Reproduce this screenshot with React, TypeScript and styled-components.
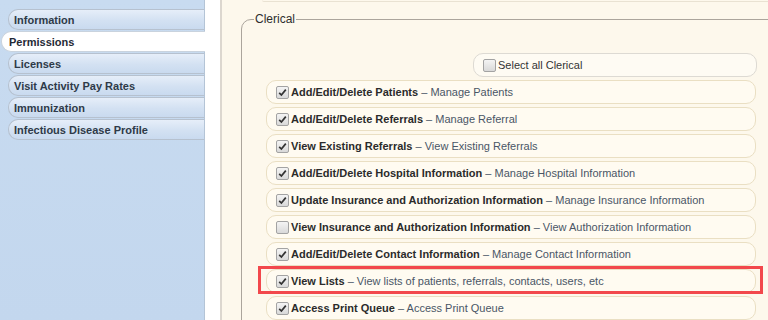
import React from "react";
import styled, { createGlobalStyle } from "styled-components";

const Global = createGlobalStyle`
  html, body { margin: 0; padding: 0; overflow: hidden; }
  body { font-family: "Liberation Sans", Arial, sans-serif; background: #fff; }
`;

const Page = styled.div`
  display: flex;
  width: 768px;
  height: 320px;
  overflow: hidden;
`;

const Sidebar = styled.nav`
  flex: none;
  background: linear-gradient(180deg, #c8dbf0 0%, #c3d7ee 100%);
  border-right: 1px solid #b4c4d6;
  padding-top: 9px;
  display: flex;
  flex-direction: column;
  gap: 1px;
  box-sizing: border-box;
  width: 205px;
`;

const Tab = styled.div<{ $active?: boolean }>`
  height: 21px;
  box-sizing: border-box;
  margin-left: ${(p) => (p.$active ? "1px" : "8px")};
  padding-left: ${(p) => (p.$active ? "7px" : "5px")};
  display: flex;
  align-items: center;
  font-size: 11px;
  font-weight: bold;
  color: ${(p) => (p.$active ? "#1f2a36" : "#2e3a48")};
  border: 1px solid ${(p) => (p.$active ? "#c9d3de" : "#b6c1cf")};
  border-right: none;
  border-radius: 10px 0 0 10px;
  background: ${(p) =>
    p.$active ? "#ffffff" : "linear-gradient(180deg, #e6eef9 0%, #d3e1f2 55%, #c9daef 100%)"};
  margin-right: ${(p) => (p.$active ? "-1px" : "0")};
  position: relative;
`;

const Gutter = styled.div`
  width: 15px;
  flex: none;
  background: #fff;
  border-right: 2px solid #dcd7cf;
`;

const Content = styled.main`
  flex: 1;
  background: #fdf8ec;
  overflow: hidden;
  position: relative;
`;

const PrevBox = styled.div`
  height: 1px;
  margin-left: 40px;
  border-bottom: 1px solid #e9e2d2;
  border-bottom-left-radius: 8px;
`;

const Fieldset = styled.fieldset`
  margin: 10px 0 0 19px;
  width: 560px;
  box-sizing: border-box;
  border: 1px solid #aba59c;
  border-radius: 10px 0 0 0;
  padding: 27px 0 0 24px;
  height: 400px;
`;

const Legend = styled.legend`
  font-size: 12px;
  color: #2e2e2e;
  padding: 0 1px;
  margin-left: -12px;
`;

const Rows = styled.div`
  width: 490px;
  display: flex;
  flex-direction: column;
  gap: 3px;
`;

const SelectAll = styled.label`
  align-self: flex-end;
  width: 284px;
  height: 24px;
  margin-right: -1px;
  box-sizing: border-box;
  border: 1px solid #dddad3;
  border-radius: 10px;
  background: #fefbf3;
  display: flex;
  align-items: center;
  padding-left: 9px;
  gap: 2px;
  font-size: 11px;
  color: #333;
`;

const Row = styled.div`
  position: relative;
  height: 24px;
  box-sizing: border-box;
  border: 1px solid #eadfc3;
  border-radius: 10px;
  background: #fffbf1;
  display: flex;
  align-items: center;
  padding-left: 9px;
  gap: 2px;
  font-size: 11px;
  white-space: nowrap;
`;

const Highlight = styled.div`
  position: absolute;
  top: -4px;
  left: -9px;
  right: -8px;
  bottom: -2px;
  border: 3px solid #f2484c;
  pointer-events: none;
`;

const Name = styled.span`
  font-weight: bold;
  color: #2b2b2b;
`;

const Desc = styled.span`
  color: #4a5666;
`;

const Box = styled.span`
  width: 13px;
  height: 13px;
  flex: none;
  box-sizing: border-box;
  border: 1px solid #a3a3a3;
  border-radius: 2px;
  background: linear-gradient(180deg, #f4f4f4 0%, #d9d9d9 100%);
  display: inline-flex;
  align-items: center;
  justify-content: center;
`;

const Check: React.FC<{ checked?: boolean }> = ({ checked }) => (
  <Box>
    {checked && (
      <svg width="9" height="9" viewBox="0 0 9 9">
        <path d="M1.2 4.8 L3.4 7 L7.8 1.6" fill="none" stroke="#333" strokeWidth="1.7" />
      </svg>
    )}
  </Box>
);

const tabs = [
  "Information",
  "Permissions",
  "Licenses",
  "Visit Activity Pay Rates",
  "Immunization",
  "Infectious Disease Profile",
];

const perms: { name: string; desc: string; checked: boolean; hl?: boolean }[] = [
  { name: "Add/Edit/Delete Patients", desc: "Manage Patients", checked: true },
  { name: "Add/Edit/Delete Referrals", desc: "Manage Referral", checked: true },
  { name: "View Existing Referrals", desc: "View Existing Referrals", checked: true },
  { name: "Add/Edit/Delete Hospital Information", desc: "Manage Hospital Information", checked: true },
  { name: "Update Insurance and Authorization Information", desc: "Manage Insurance Information", checked: true },
  { name: "View Insurance and Authorization Information", desc: "View Authorization Information", checked: false },
  { name: "Add/Edit/Delete Contact Information", desc: "Manage Contact Information", checked: true },
  { name: "View Lists", desc: "View lists of patients, referrals, contacts, users, etc", checked: true, hl: true },
  { name: "Access Print Queue", desc: "Access Print Queue", checked: true },
];

export default function App() {
  return (
    <>
      <Global />
      <Page>
        <Sidebar>
          {tabs.map((t) => (
            <Tab key={t} $active={t === "Permissions"}>
              {t}
            </Tab>
          ))}
        </Sidebar>
        <Gutter />
        <Content>
          <PrevBox />
          <Fieldset>
            <Legend>Clerical</Legend>
            <Rows>
              <SelectAll>
                <Check />
                <span>Select all Clerical</span>
              </SelectAll>
              {perms.map((p) => (
                <Row key={p.name}>
                  <Check checked={p.checked} />
                  <span>
                    <Name>{p.name}</Name> <Desc>– {p.desc}</Desc>
                  </span>
                  {p.hl && <Highlight />}
                </Row>
              ))}
            </Rows>
          </Fieldset>
        </Content>
      </Page>
    </>
  );
}
